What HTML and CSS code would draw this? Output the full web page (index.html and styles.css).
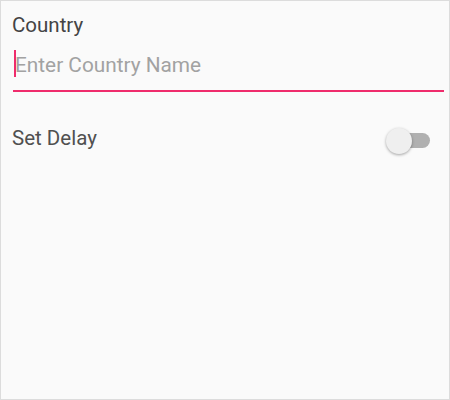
FILE: index.html
```html
<!DOCTYPE html>
<html>
<head>
<meta charset="utf-8">
<link rel="stylesheet" href="styles.css">
</head>
<body>
<div class="screen">
  <div class="label">Country</div>
  <div class="field">
    <span class="caret"></span>
    <span class="placeholder">Enter Country Name</span>
  </div>
  <div class="row">
    <span class="row-text">Set Delay</span>
    <span class="switch">
      <span class="track"></span>
      <span class="thumb"></span>
    </span>
  </div>
</div>
</body>
</html>
```

FILE: styles.css
```css
html, body {
  margin: 0;
  padding: 0;
  background: #fafafa;
}
.screen {
  box-sizing: border-box;
  width: 450px;
  height: 400px;
  border: 1px solid #dcdcdc;
  background: #fafafa;
  padding: 12px 5px 0 11px;
  display: flex;
  flex-direction: column;
  font-family: Roboto, "Noto Sans", sans-serif;
  font-size: 20.5px;
}
.label {
  line-height: 24px;
  color: #444444;
}
.field {
  margin-top: 13px;
  margin-left: 1px;
  display: flex;
  align-items: flex-start;
  padding-bottom: 13px;
  border-bottom: 2px solid #ef2c6c;
}
.caret {
  width: 2px;
  height: 27px;
  margin-left: 1px;
  background: #ef2c6c;
}
.placeholder {
  padding-top: 3px;
  margin-left: -1px;
  line-height: 24px;
  color: #a2a2a2;
  font-size: 20.8px;
}
.row {
  margin-top: 34px;
  display: flex;
  align-items: flex-start;
  justify-content: space-between;
}
.row-text {
  line-height: 24px;
  color: #505050;
}
.switch {
  position: relative;
  width: 44px;
  height: 26px;
  margin-top: 2px;
  margin-right: 14px;
}
.track {
  position: absolute;
  left: 7px;
  top: 5px;
  width: 37px;
  height: 15px;
  border-radius: 8px;
  background: #b0b0b0;
}
.thumb {
  position: absolute;
  left: 0;
  top: 0;
  width: 26px;
  height: 26px;
  border-radius: 50%;
  background: #efefef;
  box-shadow: 0 1px 3px rgba(0, 0, 0, 0.35);
}
```
